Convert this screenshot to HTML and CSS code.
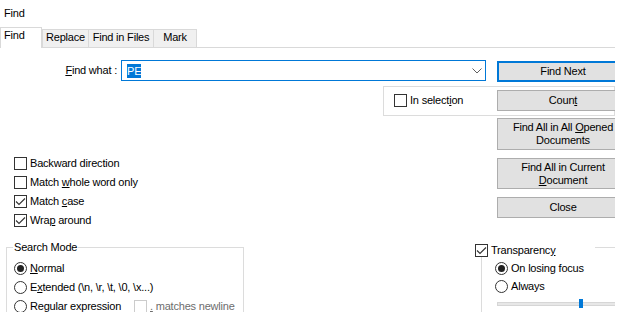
FILE: index.html
```html
<!DOCTYPE html>
<html>
<head>
<meta charset="utf-8">
<link rel="stylesheet" href="styles.css">
</head>
<body>
<div class="dialog">
  <div class="title">Find</div>
  <div class="tabs">
    <div class="tab active">Find</div>
    <div class="tab t-replace">Replace</div>
    <div class="tab t-files">Find in Files</div>
    <div class="tab t-mark">Mark</div>
  </div>
  <div class="panel">
    <div class="left">
      <div class="findrow">
        <span class="findlabel"><u>F</u>ind what :</span>
        <div class="combo">
          <span class="sel">PE</span>
          <svg class="chev" width="10" height="6" viewBox="0 0 10 6"><path d="M0.5 0.5 L5 5 L9.5 0.5" fill="none" stroke="#606060" stroke-width="1"/></svg>
        </div>
      </div>
      <div class="selbox">
        <div class="check"><span class="box"></span><span class="lbl">In select<u>i</u>on</span></div>
      </div>
      <div class="opts">
        <div class="check"><span class="box"></span><span class="lbl">Backward direction</span></div>
        <div class="check"><span class="box"></span><span class="lbl">Match <u>w</u>hole word only</span></div>
        <div class="check"><span class="box"><svg class="tick" width="11" height="11" viewBox="0 0 11 11"><path d="M1 5.5 L4 8.5 L10 2.5" fill="none" stroke="#333" stroke-width="1.1"/></svg></span><span class="lbl">Match <u>c</u>ase</span></div>
        <div class="check"><span class="box"><svg class="tick" width="11" height="11" viewBox="0 0 11 11"><path d="M1 5.5 L4 8.5 L10 2.5" fill="none" stroke="#333" stroke-width="1.1"/></svg></span><span class="lbl">Wra<u>p</u> around</span></div>
      </div>
      <div class="bottom">
        <fieldset class="mode">
          <legend>Search Mode</legend>
          <div class="list">
            <div class="check"><span class="radio on"></span><span class="lbl"><u>N</u>ormal</span></div>
            <div class="check"><span class="radio"></span><span class="lbl">E<u>x</u>tended (\n, \r, \t, \0, \x...)</span></div>
            <div class="check"><span class="radio"></span><span class="lbl rx">Re<u>g</u>ular expression</span><span class="box disabled"></span><span class="lbl dis"><u>.</u> matches newline</span></div>
          </div>
        </fieldset>
        <div class="transp">
          <div class="transp-head">
            <div class="check tcheck"><span class="box"><svg class="tick" width="11" height="11" viewBox="0 0 11 11"><path d="M1 5.5 L4 8.5 L10 2.5" fill="none" stroke="#333" stroke-width="1.1"/></svg></span><span class="lbl">Transparenc<u>y</u></span></div>
            <div class="hline"></div>
          </div>
          <div class="transp-body">
            <div class="check"><span class="radio on"></span><span class="lbl">On losing focus</span></div>
            <div class="check"><span class="radio"></span><span class="lbl">Always</span></div>
            <div class="slider"><span class="thumb"></span></div>
          </div>
        </div>
      </div>
    </div>
    <div class="right">
      <div class="btn default b-next"><span>Find Next</span></div>
      <div class="btn b-count"><span>Coun<u>t</u></span></div>
      <div class="btn b-all"><span>Find All in All <u>O</u>pened<br>Documents</span></div>
      <div class="btn b-cur"><span>Find All in Current<br><u>D</u>ocument</span></div>
      <div class="btn b-close"><span>Close</span></div>
    </div>
  </div>
</div>
</body>
</html>
```
FILE: styles.css
```css
* { box-sizing: border-box; }
html, body { margin: 0; padding: 0; background: #fff; }
body {
  width: 637px;
  height: 328px;
  overflow: hidden;
  font-family: "Liberation Sans", Arial, sans-serif;
  font-size: 11px;
  line-height: 13px;
  color: #000;
  letter-spacing: -0.2px;
}
u { text-decoration: underline; text-underline-offset: 1px; }

.title { height: 27px; padding: 7px 0 0 4px; }

.tabs {
  display: flex;
  align-items: flex-end;
  width: 615px;
  height: 21px;
  border-bottom: 1px solid #d9d9d9;
}
.tab {
  height: 18px;
  padding-top: 1px;
  border: 1px solid #d9d9d9;
  border-bottom: 0;
  background: #f0f0f0;
  text-align: center;
  flex: none;
}
.tab.active {
  width: 42px;
  height: 21px;
  margin-bottom: -1px;
  background: #fff;
  text-align: left;
  padding-left: 3px;
}
.t-replace { width: 47px; }
.t-files { width: 66px; margin-left: -1px; }
.t-mark { width: 44px; margin-left: -1px; }

.panel {
  display: flex;
  width: 615px;
  height: 264px;
  overflow: hidden;
}
.left {
  width: 497px;
  flex: none;
  display: flex;
  flex-direction: column;
}
.right {
  width: 132px;
  flex: none;
  display: flex;
  flex-direction: column;
}

.findrow {
  display: flex;
  align-items: center;
  margin-top: 12px;
  height: 21px;
}
.findlabel { width: 117px; text-align: right; flex: none; }
.combo {
  margin-left: 4px;
  width: 365px;
  height: 21px;
  border: 1px solid #0078d7;
  display: flex;
  align-items: center;
  justify-content: space-between;
  padding: 0 3px 0 5px;
}
.sel { background: #0078d7; color: #fff; line-height: 14px; }
.chev { display: block; }

.selbox {
  margin-top: 5px;
  margin-left: 383px;
  width: 232px;
  height: 30px;
  flex: none;
  border: 1px solid #dcdcdc;
  padding: 7px 0 0 10px;
}

.check {
  display: flex;
  align-items: center;
  height: 13px;
  white-space: nowrap;
}
.box {
  width: 13px;
  height: 13px;
  flex: none;
  border: 1px solid #333;
  background: #fff;
  display: flex;
}
.box.disabled { border-color: #cccccc; }
.tick { display: block; }
.lbl { margin-left: 3px; }
.lbl.dis { color: #6d6d6d; }
.lbl.rx { width: 104px; flex: none; }

.radio {
  width: 13px;
  height: 13px;
  flex: none;
  border: 1px solid #333;
  border-radius: 50%;
  background: #fff;
  display: flex;
  align-items: center;
  justify-content: center;
}
.radio.on::after {
  content: "";
  width: 7px;
  height: 7px;
  border-radius: 50%;
  background: #222;
}

.opts {
  margin-top: 41px;
  padding-left: 14px;
  display: flex;
  flex-direction: column;
  gap: 6px;
}

.bottom {
  margin-top: 13px;
  display: flex;
  align-items: flex-start;
}
.mode {
  margin: 0 0 0 6px;
  width: 238px;
  height: 120px;
  min-width: 0;
  flex: none;
  border: 1px solid #dcdcdc;
  padding: 0 0 0 7px;
}
.mode legend {
  padding: 0 1px;
  margin-left: -1px;
  line-height: 14px;
}
.mode .list {
  margin-top: 8px;
  display: flex;
  flex-direction: column;
  gap: 6px;
}

.transp {
  margin-left: 231px;
  width: 140px;
  flex: none;
  padding-top: 4px;
}
.transp-head { display: flex; height: 13px; }
.tcheck { width: 120px; flex: none; }
.hline { flex: 1; height: 1px; background: #dcdcdc; margin-top: 3px; }
.transp-body {
  margin-left: 6px;
  height: 80px;
  border-left: 1px solid #dcdcdc;
  padding: 5px 0 0 13px;
  display: flex;
  flex-direction: column;
  gap: 5px;
}
.slider {
  position: relative;
  margin: 4px 0 0 2px;
  width: 130px;
  height: 4px;
  background: #e7e7e7;
  border: 1px solid #d6d6d6;
}
.thumb {
  position: absolute;
  left: 81px;
  top: -4px;
  width: 4px;
  height: 9px;
  background: #0078d7;
}

.btn {
  flex: none;
  display: flex;
  align-items: center;
  justify-content: center;
  text-align: center;
  background: #e1e1e1;
  border: 1px solid #adadad;
  margin-top: 8px;
  height: 21px;
}
.btn.default { border: 2px solid #0078d7; }
.b-next { margin-top: 13px; }
.b-all { margin-top: 7px; height: 32px; }
.b-cur { height: 31px; }
.b-close { height: 21px; }
```
